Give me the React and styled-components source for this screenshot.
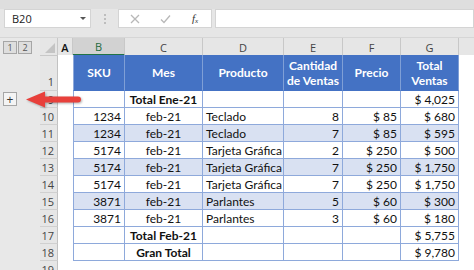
import React from 'react';
import styled, { createGlobalStyle } from 'styled-components';

const Global = createGlobalStyle`
  html, body { margin: 0; padding: 0; background: #ffffff; }
  body { font-family: Lato, "Liberation Sans", sans-serif; }
  #root { width: 474px; height: 270px; overflow: hidden; position: relative; }
`;

const COLS = '40px 18px 15px 52px 78px 81px 59px 58px 58px 1fr';

const Page = styled.div`
  width: 474px;
  height: 270px;
  position: relative;
  overflow: hidden;
  background: #fff;
`;

const FormulaBar = styled.div`
  height: 38px;
  box-sizing: border-box;
  background: #e6e6e6;
  border-top: 9px solid #dedede;
  display: flex;
  align-items: flex-start;
  padding-left: 4px;
  border-bottom: 1px solid #d6d6d6;
`;

const Box = styled.div`
  height: 19px;
  box-sizing: border-box;
  background: #fff;
  border: 1px solid #d4d4d4;
  display: flex;
  align-items: center;
  width: ${p => p.w || 'auto'};
  flex: ${p => (p.grow ? 1 : 'none')};
  margin-left: ${p => p.ml || 0};
  padding: ${p => p.pad || 0};
  justify-content: ${p => p.justify || 'flex-start'};
`;

const NameText = styled.span`
  font-family: "Open Sans", "Liberation Sans", sans-serif;
  font-size: 11px;
  color: #222;
  flex: 1;
`;

const Caret = styled.span`
  width: 0;
  height: 0;
  border-left: 3px solid transparent;
  border-right: 3px solid transparent;
  border-top: 3px solid #555;
  margin-right: 4px;
`;

const Dots = styled.div`
  width: 2px;
  height: 19px;
  margin-left: 13px;
  display: flex;
  flex-direction: column;
  justify-content: center;
  gap: 2px;
  span { display: block; width: 2px; height: 2px; background: #bdbdbd; }
`;

const IconSlot = styled.div`
  width: ${p => p.w}px;
  display: flex;
  justify-content: center;
  align-items: center;
`;

const Fx = styled.span`
  font-family: "Liberation Serif", serif;
  font-style: italic;
  font-size: 11px;
  color: #333;
  sub { font-size: 7px; vertical-align: -1px; }
`;

const Row = styled.div`
  display: grid;
  grid-template-columns: ${COLS};
  height: ${p => p.h}px;
`;

const Outline = styled.div`
  background: #e8e8e8;
  display: flex;
  align-items: ${p => (p.top ? 'center' : 'stretch')};
  gap: 1px;
  padding-left: 3px;
`;

const LevelBtn = styled.div`
  width: 14px;
  height: 13px;
  box-sizing: border-box;
  border: 1px solid #a6a6a6;
  background: #dedede;
  font-family: "Open Sans", "Liberation Sans", sans-serif;
  font-size: 9px;
  color: #555;
  display: flex;
  align-items: center;
  justify-content: center;
`;

const PlusBtn = styled(LevelBtn)`
  background: #f4f4f4;
  font-size: 12px;
  color: #333;
  margin-top: 1px;
  width: 14px;
  height: 14px;
`;

const ColHead = styled.div`
  background: ${p => (p.active ? '#d2d2d2' : '#e6e6e6')};
  box-sizing: border-box;
  border-right: 1px solid ${p => (p.last ? 'transparent' : '#c8c8c8')};
  border-bottom: ${p => (p.active ? '2px solid #217346' : '1px solid #c8c8c8')};
  display: flex;
  align-items: center;
  justify-content: center;
  font-family: "Open Sans", "Liberation Sans", sans-serif;
  font-size: 11px;
  font-weight: ${p => (p.bold ? 600 : 400)};
  color: ${p => (p.active ? '#1e6b3e' : p.bold ? '#111' : '#444')};
  padding-top: 1px;
`;

const Corner = styled.div`
  background: #e6e6e6;
  border-right: 1px solid #c8c8c8;
  border-bottom: 1px solid #c8c8c8;
  box-sizing: border-box;
  position: relative;
  &::after {
    content: '';
    position: absolute;
    right: 2px;
    bottom: 2px;
    width: 0;
    height: 0;
    border-left: 10px solid transparent;
    border-bottom: 10px solid #c4c4c4;
  }
`;

const RowHead = styled.div`
  background: #e6e6e6;
  box-sizing: border-box;
  border-right: 1px solid #c2c2c2;
  border-bottom: 1px solid #d0d0d0;
  display: flex;
  justify-content: flex-end;
  align-items: ${p => (p.bottom ? 'flex-end' : 'center')};
  padding-right: 3px;
  padding-bottom: ${p => (p.bottom ? '1px' : '0')};
  font-family: "Open Sans", "Liberation Sans", sans-serif;
  font-size: 11px;
  color: #444;
`;

const Blank = styled.div`
  background: #fff;
`;

const Cell = styled.div`
  box-sizing: border-box;
  background: ${p => (p.head ? '#4472c4' : p.band ? '#d9e1f2' : '#ffffff')};
  border-right: 1px solid ${p => (p.head ? '#7f9fd6' : '#8ea9db')};
  border-bottom: 1px solid ${p => (p.head ? '#4472c4' : '#8ea9db')};
  border-left: ${p => (p.first ? '1px solid #8ea9db' : 'none')};
  display: flex;
  align-items: center;
  justify-content: ${p => (p.align === 'right' ? 'flex-end' : p.align === 'left' ? 'flex-start' : 'center')};
  text-align: ${p => p.align || 'center'};
  padding: 0 3px;
  font-size: 12px;
  line-height: 15px;
  font-weight: ${p => (p.head || p.bold ? 700 : 400)};
  color: ${p => (p.head ? '#ffffff' : '#111')};
  white-space: ${p => (p.head ? 'normal' : 'nowrap')};
  overflow: hidden;
`;

const Arrow = styled.svg`
  position: absolute;
  left: 24px;
  top: 90px;
  filter: drop-shadow(1px 1px 1px rgba(0,0,0,0.3));
`;

const columnsHeads = ['A', 'B', 'C', 'D', 'E', 'F', 'G'];

const data = [
  { n: 9, c: ['', 'Total Ene-21', '', '', '', '$ 4,025'], bold: [1] },
  { n: 10, c: ['1234', 'feb-21', 'Teclado', '8', '$ 85', '$ 680'] },
  { n: 11, c: ['1234', 'feb-21', 'Teclado', '7', '$ 85', '$ 595'], band: true },
  { n: 12, c: ['5174', 'feb-21', 'Tarjeta Gráfica', '2', '$ 250', '$ 500'] },
  { n: 13, c: ['5174', 'feb-21', 'Tarjeta Gráfica', '7', '$ 250', '$ 1,750'], band: true },
  { n: 14, c: ['5174', 'feb-21', 'Tarjeta Gráfica', '7', '$ 250', '$ 1,750'] },
  { n: 15, c: ['3871', 'feb-21', 'Parlantes', '5', '$ 60', '$ 300'], band: true },
  { n: 16, c: ['3871', 'feb-21', 'Parlantes', '3', '$ 60', '$ 180'] },
  { n: 17, c: ['', 'Total Feb-21', '', '', '', '$ 5,755'], bold: [1] },
  { n: 18, c: ['', 'Gran Total', '', '', '', '$ 9,780'], bold: [1] },
];

const aligns = ['right', 'center', 'left', 'right', 'right', 'right'];
const headers = ['SKU', 'Mes', 'Producto', 'Cantidad de Ventas', 'Precio', 'Total Ventas'];

export default function App() {
  return (
    <Page>
      <Global />
      <FormulaBar>
        <Box w="87px" pad="0 0 0 7px">
          <NameText>B20</NameText>
          <Caret />
        </Box>
        <Dots><span /><span /><span /></Dots>
        <Box w="94px" ml="12px">
          <IconSlot w={32}>
            <svg width="10" height="10" viewBox="0 0 10 10">
              <path d="M1 1 L9 9 M9 1 L1 9" stroke="#b8b8b8" strokeWidth="1.3" fill="none" />
            </svg>
          </IconSlot>
          <IconSlot w={28}>
            <svg width="11" height="10" viewBox="0 0 11 10">
              <path d="M1 5.5 L4 8.5 L10 1.5" stroke="#b8b8b8" strokeWidth="1.3" fill="none" />
            </svg>
          </IconSlot>
          <IconSlot w={32}>
            <Fx>f<sub>x</sub></Fx>
          </IconSlot>
        </Box>
        <Box grow ml="3px" />
      </FormulaBar>

      <Row h={17}>
        <Outline top>
          <LevelBtn>1</LevelBtn>
          <LevelBtn>2</LevelBtn>
        </Outline>
        <Corner />
        {columnsHeads.map(c => (
          <ColHead key={c} bold={c === 'A'} active={c === 'B'}>{c}</ColHead>
        ))}
        <ColHead last />
      </Row>

      <Row h={36}>
        <Outline />
        <RowHead bottom>1</RowHead>
        <Blank />
        {headers.map((h, i) => (
          <Cell key={h} head first={i === 0}>{h}</Cell>
        ))}
        <Blank />
      </Row>

      {data.map(r => (
        <Row key={r.n} h={17}>
          <Outline>{r.n === 9 && <PlusBtn>+</PlusBtn>}</Outline>
          <RowHead>{r.n}</RowHead>
          <Blank />
          {r.c.map((v, i) => (
            <Cell
              key={i}
              first={i === 0}
              band={r.band}
              bold={r.bold && r.bold.includes(i)}
              align={aligns[i]}
            >
              {v}
            </Cell>
          ))}
          <Blank />
        </Row>
      ))}

      <Row h={17}>
        <Outline />
        <RowHead>19</RowHead>
        <Blank />
      </Row>

      <Arrow width="60" height="20" viewBox="0 0 60 20">
        <path d="M2 9.5 L21 1.5 L21 6.5 L54 6.5 Q57 6.5 57 9.5 Q57 12.5 54 12.5 L21 12.5 L21 17.5 Z" fill="#e8403b" />
      </Arrow>
    </Page>
  );
}
